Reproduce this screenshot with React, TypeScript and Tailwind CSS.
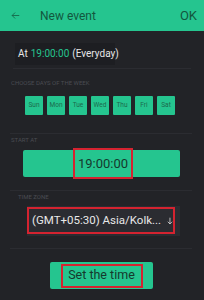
import React from 'react';

const days = ['Sun', 'Mon', 'Tue', 'Wed', 'Thu', 'Fri', 'Sat'];

export default function App() {
    return (
        <div className="w-[204px] h-[300px] overflow-hidden bg-[#222327] flex flex-col font-['Roboto',sans-serif]">
            {/* Header */}
            <header className="h-[31px] shrink-0 bg-[#25c58f] flex items-center text-[#13573e]">
                <svg className="ml-[11px] w-[9px] h-[9px]" viewBox="0 0 24 24" fill="none" stroke="currentColor" strokeWidth="2">
                    <path d="M22 12H3M11 4l-8 8 8 8" />
                </svg>
                <span className="ml-[20px] text-[12px] leading-none">New event</span>
                <span className="ml-auto mr-[7px] text-[13px] leading-none">OK</span>
            </header>

            {/* Summary */}
            <div className="mt-[12px] ml-[15px] w-[100px] h-[22px] bg-[#1d1e22] flex items-center pl-[3px] text-[10px] text-[#e6e6e6] leading-none">
                At <span className="ml-[3px] text-[#25c58f]">19:00:00</span>
                <span className="ml-[3px]">(Everyday)</span>
            </div>
            <div className="mt-[3px] mx-[13px] h-px bg-[#2b2c31]" />

            <div className="mt-[11px] ml-[11px] text-[6px] text-[#4a4c52] leading-none">CHOOSE DAYS OF THE WEEK</div>

            <div className="mt-[10px] ml-[25px] flex gap-[4px]">
                {days.map((d) => (
                    <div key={d} className="w-[18px] h-[19px] rounded-[1px] bg-[#25c58f] flex items-center justify-center text-[6.5px] text-[#1c6a4d] leading-none">
                        {d}
                    </div>
                ))}
            </div>

            <div className="mt-[18px] ml-[10px] mr-[12px] h-px bg-[#2b2c31]" />
            <div className="mt-[3px] ml-[11px] text-[6px] text-[#4a4c52] leading-none">START AT</div>

            <div className="mt-[7px] ml-[23px] w-[157px] h-[27px] rounded-[2px] bg-[#25c58f] flex items-center justify-center">
                <span className="ml-[3px] w-[60px] h-[31px] shrink-0 border-2 border-[#d42330] flex items-center justify-center text-[13px] text-[#15392d] leading-none">
                    19:00:00
                </span>
            </div>

            <div className="mt-[13px] ml-[10px] mr-[12px] h-px bg-[#2b2c31]" />
            <div className="mt-[3px] ml-[18px] text-[6px] text-[#4a4c52] leading-none">TIME ZONE</div>

            <div className="mt-[6px] ml-[27px] w-[153px] h-[30px] bg-[#2b2c31] pt-px">
                <div className="w-[148px] h-[27px] border-2 border-[#d42330] flex items-center pl-[3px] text-[11.5px] text-[#e8e8e8] leading-none whitespace-nowrap">
                    (GMT+05:30) Asia/Kolk...
                    <svg className="ml-[6px] w-[8px] h-[10px]" viewBox="0 0 8 10" fill="none" stroke="currentColor" strokeWidth="1">
                        <path d="M4 0.5V9M1 6l3 3 3-3" />
                    </svg>
                </div>
            </div>

            <div className="mt-[12px] ml-[10px] mr-[12px] h-px bg-[#2b2c31]" />

            <div className="mt-[13px] ml-[50px] w-[103px] h-[27px] rounded-[2px] bg-[#25c58f] flex items-center justify-center">
                <span className="w-[82px] h-[24px] border-2 border-[#d42330] flex items-center justify-center text-[12.5px] text-[#15392d] leading-none">
                    Set the time
                </span>
            </div>
        </div>
    );
}
